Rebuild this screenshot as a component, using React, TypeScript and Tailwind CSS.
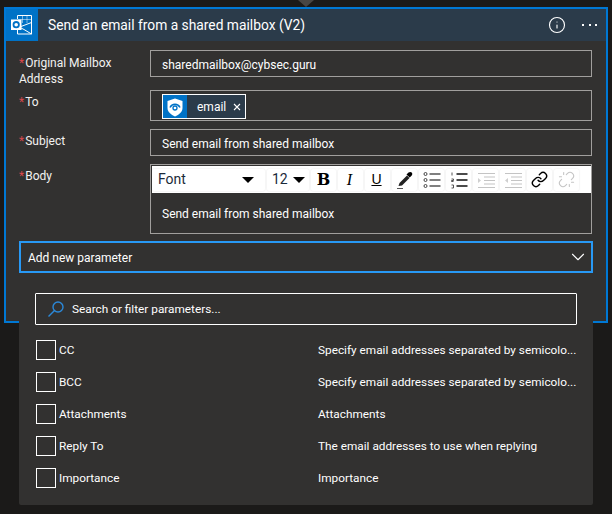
import { ChevronDown, Info, Link, Unlink } from "lucide-react";

const params = [
  { name: "CC", desc: "Specify email addresses separated by semicolo..." },
  { name: "BCC", desc: "Specify email addresses separated by semicolo..." },
  { name: "Attachments", desc: "Attachments" },
  { name: "Reply To", desc: "The email addresses to use when replying" },
  { name: "Importance", desc: "Importance" },
];

const OutlookIcon = () => (
  <svg width="32" height="32" viewBox="0 0 32 32" fill="none">
    <path d="M11.500 10V6.500h14v18.500h-14v-4" stroke="#fff" strokeWidth="1" />
    <path d="M16.500 7v7M21 7v7M12 10.500h13" stroke="#fff" strokeWidth="0.800" opacity="0.6" />
    <path d="M15 17.500l10.500-4M15 19l3 1.500 7.500 4.500" stroke="#fff" strokeWidth="1" />
    <rect x="5" y="10.500" width="10.500" height="10.500" fill="#fff" />
    <circle cx="10.200" cy="15.700" r="2.700" stroke="#0072c6" strokeWidth="1.800" />
  </svg>
);

const ShieldIcon = () => (
  <svg width="24" height="24" viewBox="0 0 24 24" fill="none">
    <path d="M12 3.500l7.500 2.500v7c0 4-3.500 6.500-7.500 8.500-4-2-7.500-4.500-7.500-8.500v-7z" fill="#fff" />
    <path d="M7 12.500a5.500 5.500 0 0 1 10 0" stroke="#0072c6" strokeWidth="1.500" />
    <circle cx="12" cy="13" r="2" stroke="#0072c6" strokeWidth="1.300" />
  </svg>
);

const Pen = () => (
  <svg width="20" height="20" viewBox="0 0 20 20">
    <path d="M3.500 16l1-3 7.500-7.500 2.500 2.500-7.500 7.500z" fill="#222" />
    <path d="M11.500 4.500l2-2c1-.8 2.500-.8 3.200 0 .8.800.8 2.200 0 3l-2 2z" fill="#000" />
    <path d="M2 18.500h6" stroke="#555" strokeWidth="1" />
  </svg>
);

const Bullets = () => (
  <svg width="20" height="20" viewBox="0 0 20 20" fill="none">
    <circle cx="3.500" cy="4" r="1.500" stroke="#444" strokeWidth="1" />
    <circle cx="3.500" cy="10" r="1.500" stroke="#444" strokeWidth="1" />
    <circle cx="3.500" cy="16" r="1.500" stroke="#444" strokeWidth="1" />
    <path d="M7.500 4h11M7.500 10h11M7.500 16h11" stroke="#555" strokeWidth="1.300" />
  </svg>
);

const Numbers = () => (
  <svg width="20" height="20" viewBox="0 0 20 20" fill="none">
    <path d="M3 2.500v3M2.500 9h2v1.500h-2v1h2M2.500 15h2v3h-2" stroke="#555" strokeWidth="1" />
    <path d="M7.500 4h11M7.500 10h11M7.500 16h11" stroke="#111" strokeWidth="1.500" />
  </svg>
);

const Indent = ({ flip }: { flip?: boolean }) => (
  <svg width="20" height="20" viewBox="0 0 20 20" fill="none">
    <path d="M2 3.500h17M8 7h11M8 10.500h11M8 14h11M2 17.500h17" stroke="#c4c4c4" strokeWidth="1.200" />
    <path d={flip ? "M5 8v5l-3-2.500z" : "M2 8v5l3-2.500z"} fill="#cfcfcf" />
  </svg>
);

const Triangle = () => (
  <div className="w-0 h-0 border-l-[6px] border-r-[6px] border-t-[6px] border-l-transparent border-r-transparent border-t-black" />
);

const ToolButton = ({ children }: { children: React.ReactNode }) => (
  <div className="w-[25px] h-[22px] flex items-center justify-center bg-white rounded-[2px] shadow-[0_0_2px_rgba(0,0,0,0.12)]">
    {children}
  </div>
);

const Label = ({ children, first }: { children: React.ReactNode; first?: boolean }) => (
  <div className={first ? "pt-[5px] leading-[16px] text-[12px] text-[#f3f2f1]" : "pt-[4px] leading-[16px] text-[12px] text-[#f3f2f1]"}>
    <span className="text-[#d9484d] mr-[1px]">*</span>
    {children}
  </div>
);

export default function App() {
  return (
    <div
      className="relative w-[612px] h-[514px] overflow-hidden bg-[#1b1a19] px-[4px] pt-[7px] text-white"
      style={{ fontFamily: 'Roboto, "Open Sans", sans-serif' }}
    >
      {/* connector arrow coming from the step above */}
      <svg className="absolute left-[296px] top-0" width="20" height="7" viewBox="0 0 20 7">
        <path d="M2 0l8 7 8-7z" fill="#484644" />
      </svg>

      <div className="w-[604px] h-[316px] border-2 border-[#0078d4] bg-[#323130]">
        <div className="h-[32px] flex items-center bg-[#2b3b4a]">
          <div className="w-[32px] h-[32px] bg-[#0072c6] flex items-center justify-center">
            <OutlookIcon />
          </div>
          <span className="ml-[10px] text-[13.8px] whitespace-nowrap">
            Send an email from a shared mailbox (V2)
          </span>
          <Info size={18} strokeWidth={1.5} className="ml-auto" />
          <div className="ml-[16px] mr-[9px] w-[15px] flex justify-between">
            <span className="w-[2px] h-[2px] bg-white" />
            <span className="w-[2px] h-[2px] bg-white" />
            <span className="w-[2px] h-[2px] bg-white" />
          </div>
        </div>

        <div className="pl-[13px] pr-[14px] pt-[9px]">
          <div className="grid grid-cols-[131px_1fr] grid-rows-[27px] mb-[13px]">
            <Label first>Original Mailbox Address</Label>
            <div className="border border-[#a19f9d] px-[11px] pt-[2px] flex items-center text-[12px]">
              sharedmailbox@cybsec.guru
            </div>
          </div>

          <div className="grid grid-cols-[131px_1fr] grid-rows-[31px] mb-[8px]">
            <Label>To</Label>
            <div className="border border-[#a19f9d] px-[11px] pt-[3px]">
              <div className="w-[84px] h-[25px] border border-white bg-[#2b3b4a] flex items-center text-[12px]">
                <div className="w-[24px] h-[23px] bg-[#0072c6] flex items-center justify-center">
                  <ShieldIcon />
                </div>
                <span className="ml-[10px]">email</span>
                <svg className="ml-[7px]" width="8" height="8" viewBox="0 0 8 8">
                  <path d="M1 1l6 6M7 1L1 7" stroke="#fff" strokeWidth="1.100" />
                </svg>
              </div>
            </div>
          </div>

          <div className="grid grid-cols-[131px_1fr] grid-rows-[27px] mb-[8px]">
            <Label>Subject</Label>
            <div className="border border-[#a19f9d] px-[11px] pt-[2px] flex items-center text-[12px]">
              Send email from shared mailbox
            </div>
          </div>

          <div className="grid grid-cols-[131px_1fr] grid-rows-[70px] mb-[7px]">
            <Label>Body</Label>
            <div className="border border-[#a19f9d] pt-[1px]">
              <div className="h-[27px] ml-[1px] bg-white flex items-center gap-[2px] text-[#1b2a3a]">
                <div className="w-[113px] h-[22px] flex items-center justify-between pl-[6px] pr-[11px] text-[14px] bg-white rounded-[2px] shadow-[0_0_2px_rgba(0,0,0,0.12)]">
                  Font
                  <Triangle />
                </div>
                <div className="w-[42px] h-[22px] flex items-center justify-between pl-[5px] pr-[4px] text-[14px] bg-white rounded-[2px] shadow-[0_0_2px_rgba(0,0,0,0.12)]">
                  12
                  <Triangle />
                </div>
                <ToolButton>
                  <span className="text-[16px] font-bold text-black" style={{ fontFamily: '"DejaVu Serif", serif' }}>B</span>
                </ToolButton>
                <ToolButton>
                  <span className="text-[16px] italic text-black mr-[2px]" style={{ fontFamily: '"Liberation Serif", serif' }}>I</span>
                </ToolButton>
                <ToolButton>
                  <span className="text-[14px] underline text-black mr-[2px]" style={{ fontFamily: '"Liberation Sans", sans-serif' }}>U</span>
                </ToolButton>
                <ToolButton><Pen /></ToolButton>
                <ToolButton><Bullets /></ToolButton>
                <ToolButton><Numbers /></ToolButton>
                <ToolButton><Indent /></ToolButton>
                <ToolButton><Indent flip /></ToolButton>
                <ToolButton><Link size={17} strokeWidth={2} className="text-black" /></ToolButton>
                <ToolButton><Unlink size={17} strokeWidth={1.5} className="text-[#c4c4c4]" /></ToolButton>
              </div>
              <div className="pl-[11px] pt-[12px] text-[12px]">Send email from shared mailbox</div>
            </div>
          </div>

          <div className="relative h-[32px] -mr-[1px] border-2 border-[#2899f5] flex items-center justify-between pl-[7px] pr-[2px] text-[12px]">
            <span className="pt-[1px]">Add new parameter</span>
            <ChevronDown size={22} strokeWidth={1.2} />

            <div className="absolute top-[30px] -left-[2px] -right-[2px] h-[232px] bg-[#323130] rounded-b-[2px] px-[16px] pt-[20px] text-[11.8px]">
              <div className="h-[32px] border border-white rounded-[1px] flex items-center pl-[11px] gap-[7px]">
                <svg width="18" height="18" viewBox="0 0 18 18" fill="none">
                  <circle cx="11" cy="7" r="5" stroke="#2b88d8" strokeWidth="1.400" />
                  <path d="M7.500 10.500L1.500 16.500" stroke="#2b88d8" strokeWidth="1.400" />
                </svg>
                <span className="pt-[1px]">Search or filter parameters...</span>
              </div>
              <div className="mt-[9px] pl-[1px]">
                {params.map((p) => (
                  <div key={p.name} className="grid grid-cols-[282px_1fr] h-[32px] items-center">
                    <div className="flex items-center gap-[3px]">
                      <div className="w-[20px] h-[20px] border border-white" />
                      <span className="pt-[2px]">{p.name}</span>
                    </div>
                    <div className="whitespace-nowrap pt-[2px]">{p.desc}</div>
                  </div>
                ))}
              </div>
            </div>
          </div>
        </div>
      </div>
    </div>
  );
}
